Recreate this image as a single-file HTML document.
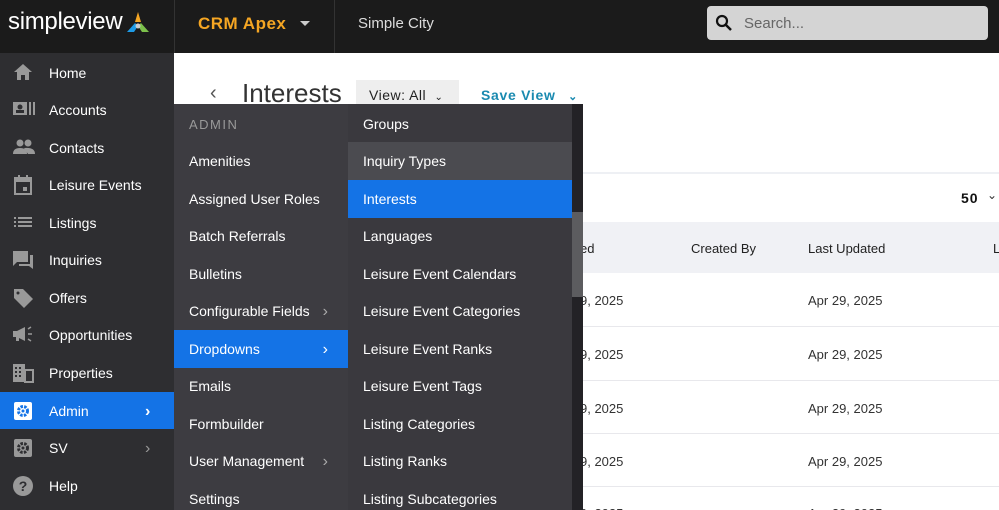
<!DOCTYPE html>
<html style="width:999px;height:510px;overflow:hidden"><head><style>
*{margin:0;padding:0;box-sizing:border-box}
body{width:999px;height:510px;overflow:hidden;font-family:"Liberation Sans",sans-serif;background:#fff;position:relative}
#w{position:absolute;left:0;top:0;width:999px;height:510px;overflow:hidden}
.hdr{position:absolute;left:0;top:0;width:999px;height:53px;background:#1b1b1b}
.sb{position:absolute;left:0;top:53px;width:174px;height:457px;background:#2e2e31}
.it{position:absolute;left:0;width:174px;height:37px;color:#fff;font-size:14px;line-height:39px}
.it span{position:absolute;left:49px}
.it svg{position:absolute;left:12px;top:8px}
.abs{position:absolute}
.c1{position:absolute;left:174px;top:104px;width:174px;height:406px;background:#3d3c41}
.c2{position:absolute;left:348px;top:104px;width:224px;height:406px;background:#3a393e}
.m{position:absolute;height:37.5px;line-height:39.5px;color:#fff;font-size:14px;padding-left:15px}
.chev{position:absolute;right:20px;top:0;color:#aaa;font-size:16px}
.row{position:absolute;left:583px;width:416px;border-bottom:1px solid #e8e8ec;font-size:13px;color:#333}
</style></head><body><div id="w">
<div class="hdr">
 <div class="abs" style="left:8px;top:8px;color:#fff;font-size:24px;letter-spacing:-0.3px">simpleview</div>
 <svg class="abs" style="left:124px;top:10px" width="28" height="24" viewBox="0 0 28 24"><path d="M14 2 L11 12 L17 12Z" fill="#f5a623"/><path d="M3 22 L11 13 L14 16 L10 22Z" fill="#1e9be6"/><path d="M25 22 L17 13 L14 16 L18 22Z" fill="#7cc04b"/><circle cx="14" cy="16" r="2.5" fill="#ccc"/></svg>
 <div class="abs" style="left:174px;top:0;width:1px;height:53px;background:#333"></div>
 <div class="abs" style="left:198px;top:14px;color:#f5a623;font-size:17px;font-weight:bold;letter-spacing:0.5px">CRM Apex</div>
 <div class="abs" style="left:300px;top:21px;width:0;height:0;border-left:5px solid transparent;border-right:5px solid transparent;border-top:5px solid #ccc"></div>
 <div class="abs" style="left:334px;top:0;width:1px;height:53px;background:#333"></div>
 <div class="abs" style="left:358px;top:15px;color:#ddd;font-size:15px">Simple City</div>
 <div class="abs" style="left:707px;top:6px;width:281px;height:34px;background:#d4d4d4;border-radius:4px">
  <svg class="abs" style="left:8px;top:8px" width="18" height="18" viewBox="0 0 18 18"><circle cx="7" cy="7" r="5" fill="none" stroke="#111" stroke-width="2.2"/><path d="M11 11 L16 16" stroke="#111" stroke-width="2.5"/></svg>
  <div class="abs" style="left:37px;top:9px;color:#666;font-size:15px">Search...</div>
 </div>
</div>
<div class="sb">
 <div class="it" style="top:1px"><svg width="22" height="20" viewBox="0 0 22 20"><path d="M11 2 L2 10 H5 V18 H9 V13 H13 V18 H17 V10 H20Z" fill="#999"/></svg><span>Home</span></div>
 <div class="it" style="top:38px"><svg width="24" height="20" viewBox="0 0 24 20"><rect x="1" y="3" width="14" height="13" fill="#999"/><circle cx="8" cy="8" r="2.5" fill="#2e2e31"/><rect x="4" y="11" width="8" height="3" fill="#2e2e31"/><rect x="17" y="3" width="2" height="13" fill="#999"/><rect x="21" y="3" width="2" height="13" fill="#999"/></svg><span>Accounts</span></div>
 <div class="it" style="top:76px"><svg width="24" height="20" viewBox="0 0 24 20"><circle cx="8" cy="6" r="3.5" fill="#999"/><circle cx="16" cy="6" r="3.5" fill="#999"/><path d="M1 17 Q1 11 8 11 Q15 11 15 17Z M12 11 Q23 10 23 17 H16Z" fill="#999"/></svg><span>Contacts</span></div>
 <div class="it" style="top:113px"><svg width="22" height="22" viewBox="0 0 22 22"><rect x="3" y="4" width="16" height="16" fill="none" stroke="#999" stroke-width="2"/><rect x="3" y="4" width="16" height="4" fill="#999"/><rect x="6" y="1" width="2" height="4" fill="#999"/><rect x="14" y="1" width="2" height="4" fill="#999"/><rect x="11" y="13" width="4" height="4" fill="#999"/></svg><span>Leisure Events</span></div>
 <div class="it" style="top:151px"><svg width="22" height="20" viewBox="0 0 22 20"><path d="M2 5h2v2H2zM6 5h14v2H6zM2 9h2v2H2zM6 9h14v2H6zM2 13h2v2H2zM6 13h14v2H6z" fill="#999"/></svg><span>Listings</span></div>
 <div class="it" style="top:188px"><svg width="22" height="22" viewBox="0 0 22 22"><path d="M1 2h15v11H5l-4 4z" fill="#999"/><path d="M18 6h3v14l-4-3H7v-2h11z" fill="#999"/></svg><span>Inquiries</span></div>
 <div class="it" style="top:226px"><svg width="22" height="22" viewBox="0 0 22 22"><path d="M2 2h9l10 10-9 9L2 11z" fill="#999"/><circle cx="6" cy="6" r="1.5" fill="#2e2e31"/></svg><span>Offers</span></div>
 <div class="it" style="top:263px"><svg width="22" height="20" viewBox="0 0 22 20"><path d="M1 7h4l8-4v14l-8-4H1z M4 13h3v4H4z" fill="#999"/><path d="M16 5l3-2M16 10h4M16 15l3 2" stroke="#999" stroke-width="1.5"/></svg><span>Opportunities</span></div>
 <div class="it" style="top:301px"><svg width="22" height="22" viewBox="0 0 22 22"><rect x="1" y="2" width="12" height="18" fill="#999"/><rect x="13" y="8" width="8" height="12" fill="none" stroke="#999" stroke-width="2"/><path d="M3 5h2v2H3zM7 5h2v2H7zM3 9h2v2H3zM7 9h2v2H7zM3 13h2v2H3zM7 13h2v2H7zM15 11h2v2h-2zM15 15h2v2h-2z" fill="#2e2e31"/></svg><span>Properties</span></div>
 <div class="it" style="top:339px;background:#1473e6"><svg width="22" height="22" viewBox="0 0 22 22"><rect x="2" y="2" width="18" height="18" rx="2" fill="#fff"/><circle cx="11" cy="11" r="4.5" fill="none" stroke="#1473e6" stroke-width="3" stroke-dasharray="2.5 1.2"/><circle cx="11" cy="11" r="1.5" fill="#1473e6"/></svg><span>Admin</span><span style="left:145px;font-weight:bold;font-size:16px">›</span></div>
 <div class="it" style="top:376px"><svg width="22" height="22" viewBox="0 0 22 22"><rect x="2" y="2" width="18" height="18" rx="2" fill="#999"/><circle cx="11" cy="11" r="4.5" fill="none" stroke="#2e2e31" stroke-width="3" stroke-dasharray="2.5 1.2"/><circle cx="11" cy="11" r="1.5" fill="#2e2e31"/></svg><span>SV</span><span style="left:145px;color:#999;font-size:16px">›</span></div>
 <div class="it" style="top:414px"><svg width="22" height="22" viewBox="0 0 22 22"><circle cx="11" cy="11" r="10" fill="#999"/><text x="11" y="16" text-anchor="middle" font-size="14" font-weight="bold" fill="#2e2e31" font-family="Liberation Sans">?</text></svg><span>Help</span></div>
</div>
<div class="abs" style="left:210px;top:82px;color:#555;font-size:20px">‹</div>
<div class="abs" style="left:242px;top:78px;color:#333;font-size:26px;font-weight:300">Interests</div>
<div class="abs" style="left:356px;top:80px;width:103px;height:28px;background:#eee;font-size:14px;color:#222;line-height:30px;padding-left:13px;letter-spacing:0.5px">View: All <span style="font-size:10px;margin-left:4px">⌄</span></div>
<div class="abs" style="left:481px;top:87px;color:#1a8ab0;font-size:14px;font-weight:bold;letter-spacing:0.7px">Save View <span style="margin-left:8px;font-size:11px">⌄</span></div>
<div class="abs" style="left:583px;top:172px;width:416px;height:2px;background:#eef0f4"></div>
<div class="abs" style="left:961px;top:190px;font-size:14px;font-weight:bold;color:#111;letter-spacing:1px">50</div>
<div class="abs" style="left:987px;top:188px;font-size:12px;color:#333">⌄</div>
<div class="abs" style="left:583px;top:222px;width:416px;height:51px;background:#f0f1f5;font-size:13px;color:#222">
 <span class="abs" style="left:-3px;top:19px">ed</span><span class="abs" style="left:108px;top:19px">Created By</span><span class="abs" style="left:225px;top:19px">Last Updated</span><span class="abs" style="left:410px;top:19px">L</span>
</div>
<div class="row" style="top:273px;height:54px"><span class="abs" style="left:-3px;top:20px">9, 2025</span><span class="abs" style="left:225px;top:20px">Apr 29, 2025</span></div>
<div class="row" style="top:327px;height:54px"><span class="abs" style="left:-3px;top:20px">9, 2025</span><span class="abs" style="left:225px;top:20px">Apr 29, 2025</span></div>
<div class="row" style="top:381px;height:53px"><span class="abs" style="left:-3px;top:20px">9, 2025</span><span class="abs" style="left:225px;top:20px">Apr 29, 2025</span></div>
<div class="row" style="top:434px;height:53px"><span class="abs" style="left:-3px;top:20px">9, 2025</span><span class="abs" style="left:225px;top:20px">Apr 29, 2025</span></div>
<div class="abs" style="left:583px;top:487px;width:416px;height:23px;overflow:hidden;font-size:13px;color:#333"><span class="abs" style="left:-3px;top:19px">9, 2025</span><span class="abs" style="left:225px;top:19px">Apr 29, 2025</span></div>
<div class="c1">
 <div class="m" style="top:1px;color:#999;letter-spacing:1.5px;font-size:13px">ADMIN</div>
 <div class="m" style="top:38px;width:174px">Amenities</div>
 <div class="m" style="top:76px;width:174px">Assigned User Roles</div>
 <div class="m" style="top:113px;width:174px">Batch Referrals</div>
 <div class="m" style="top:151px;width:174px">Bulletins</div>
 <div class="m" style="top:188px;width:174px">Configurable Fields<span class="chev">›</span></div>
 <div class="m" style="top:226px;width:174px;background:#1473e6">Dropdowns<span class="chev" style="color:#fff">›</span></div>
 <div class="m" style="top:263px;width:174px">Emails</div>
 <div class="m" style="top:301px;width:174px">Formbuilder</div>
 <div class="m" style="top:338px;width:174px">User Management<span class="chev">›</span></div>
 <div class="m" style="top:376px;width:174px">Settings</div>
</div>
<div class="c2">
 <div class="m" style="top:1px;width:224px">Groups</div>
 <div class="m" style="top:38px;width:224px;background:#4b4b50">Inquiry Types</div>
 <div class="m" style="top:76px;width:224px;background:#1473e6">Interests</div>
 <div class="m" style="top:113px;width:224px">Languages</div>
 <div class="m" style="top:151px;width:224px">Leisure Event Calendars</div>
 <div class="m" style="top:188px;width:224px">Leisure Event Categories</div>
 <div class="m" style="top:226px;width:224px">Leisure Event Ranks</div>
 <div class="m" style="top:263px;width:224px">Leisure Event Tags</div>
 <div class="m" style="top:301px;width:224px">Listing Categories</div>
 <div class="m" style="top:338px;width:224px">Listing Ranks</div>
 <div class="m" style="top:376px;width:224px">Listing Subcategories</div>
</div>
<div class="abs" style="left:572px;top:104px;width:11px;height:406px;background:#232226"></div>
<div class="abs" style="left:572px;top:212px;width:11px;height:85px;background:#5c5c5f"></div>
</div></body></html>
